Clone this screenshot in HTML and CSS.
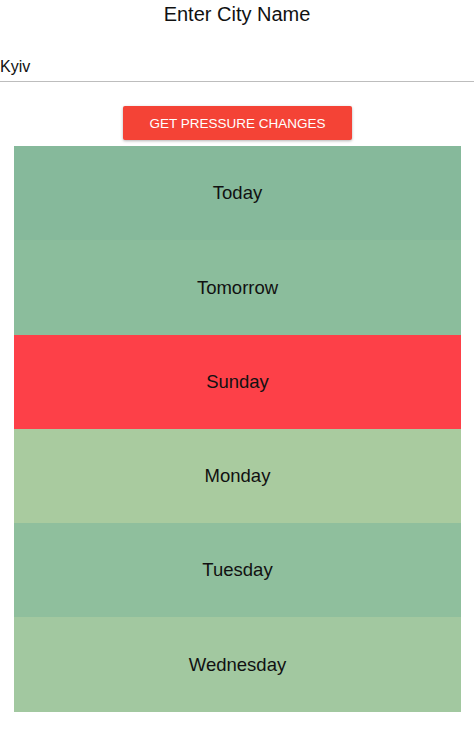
FILE: index.html
```html
<!DOCTYPE html>
<html>
<head>
<meta charset="utf-8">
<link rel="stylesheet" href="styles.css">
</head>
<body>
<div class="page">
  <h1 class="title">Enter City Name</h1>
  <input class="city" type="text" value="Kyiv">
  <div class="actions"><button class="btn">GET PRESSURE CHANGES</button></div>
  <ul class="days">
    <li class="day c1">Today</li>
    <li class="day c2">Tomorrow</li>
    <li class="day c3">Sunday</li>
    <li class="day c4">Monday</li>
    <li class="day c5">Tuesday</li>
    <li class="day c6">Wednesday</li>
  </ul>
</div>
</body>
</html>
```
FILE: styles.css
```css
html, body { margin: 0; padding: 0; background: #fff; }
body { font-family: "Liberation Sans", Arial, sans-serif; color: #111; }
.page { display: flex; flex-direction: column; }
.title { margin: 0; height: 28px; line-height: 28px; font-size: 20px; font-weight: normal; text-align: center; color: #111; }
.city {
  margin: 22px 0 0 0; height: 32px; padding: 3px 0 0 0; border: 0; border-bottom: 1px solid #bdbdbd;
  font-family: inherit; font-size: 16px; color: #111; outline: none; box-sizing: border-box; width: 100%; background: transparent;
}
.actions { display: flex; justify-content: center; margin-top: 24px; }
.btn {
  width: 229px; height: 34px; margin-left: 1px; border: 0; border-radius: 2px; background: #f44336; color: #fff;
  font-family: inherit; font-size: 13.5px; box-shadow: 0 1px 3px rgba(0,0,0,0.3);
}
.days { list-style: none; margin: 6px 13px 0 14px; padding: 0; }
.day { height: 94px; display: flex; align-items: center; justify-content: center; font-size: 18.5px; color: #111; }
.c1 { background: #86b99b; }
.c2 { background: #8bbd9c; height: 95px; }
.c3 { background: #fd4048; }
.c4 { background: #a9cb9f; }
.c5 { background: #8fbf9d; }
.c6 { background: #a2c8a0; height: 95px; }
```
